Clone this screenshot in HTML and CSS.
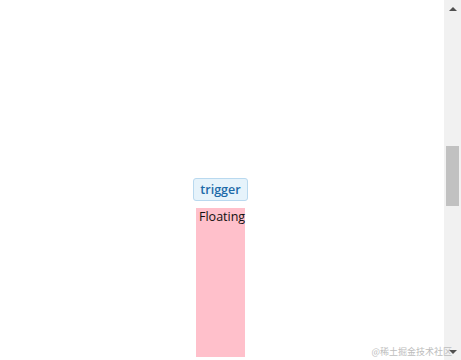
FILE: index.html
```html
<!DOCTYPE html>
<html>
<head>
<meta charset="utf-8">
<link rel="stylesheet" href="styles.css">
</head>
<body>
<div class="page">
  <main class="main">
    <button class="trigger">trigger</button>
    <div class="floating">Floating</div>
  </main>
  <div class="scrollbar">
    <div class="arrow up"></div>
    <div class="track"><div class="thumb"></div></div>
    <div class="arrow down"></div>
  </div>
  <div class="watermark">@稀土掘金技术社区</div>
</div>
</body>
</html>
```
FILE: styles.css
```css
html, body { margin: 0; padding: 0; }
body { width: 461px; height: 360px; overflow: hidden; background: #fff;
  font-family: "Open Sans", "Noto Sans", "Noto Sans CJK SC", sans-serif; }
.page { position: relative; display: flex; width: 461px; height: 360px; }
.main { flex: 1; display: flex; flex-direction: column; padding-top: 178px; padding-left: 193px; box-sizing: border-box; }
.trigger { width: 55px; height: 23px; box-sizing: border-box; margin: 0; padding: 0;
  border: 1px solid #b9d9ef; border-radius: 3px; background: #e6f3fb; color: #1d6aa8;
  font-family: inherit; font-size: 12.5px; font-weight: 600; line-height: 20px; }
.floating { margin-top: 7px; margin-left: 3px; width: 49px; height: 149px; background: #ffc0cb;
  color: #111; font-size: 12.5px; line-height: 18px; padding-left: 3px; box-sizing: border-box; }
.watermark { position: absolute; right: 9px; bottom: 2px; font-size: 9px; line-height: 12px; color: #bdbdbd;
  font-family: "Noto Sans CJK SC", sans-serif; }
.scrollbar { width: 17px; background: #f1f1f1; display: flex; flex-direction: column; }
.arrow { height: 17px; display: flex; align-items: center; justify-content: center; }
.arrow.up::before { content: ""; border-left: 4px solid transparent; border-right: 4px solid transparent; border-bottom: 4px solid #505050; }
.arrow.down::before { content: ""; border-left: 4px solid transparent; border-right: 4px solid transparent; border-top: 4px solid #505050; }
.track { flex: 1; padding-top: 129px; display: flex; justify-content: center; }
.thumb { width: 13px; height: 60px; background: #c1c1c1; }
```
